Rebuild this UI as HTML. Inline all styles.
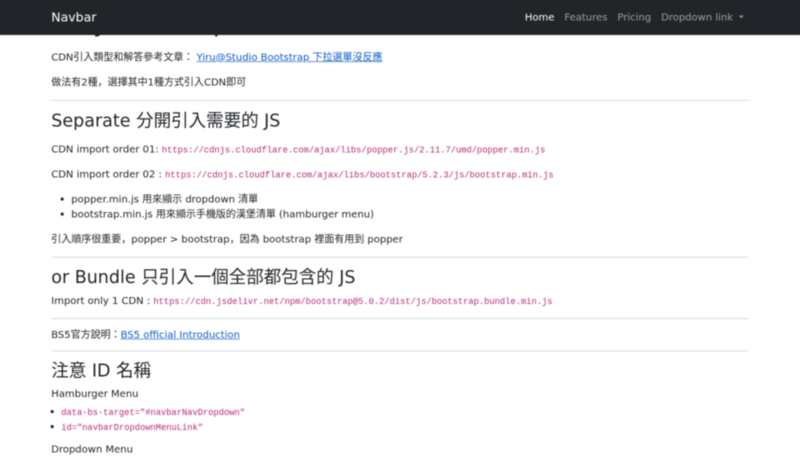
<!DOCTYPE html>
<html>
<head>
<meta charset="utf-8">
<title>Navbar</title>
<style>
html,body{margin:0;padding:0;width:800px;height:450px;overflow:hidden;background:#fff}
#s{position:absolute;left:-10px;top:-10px;width:1340px;height:760px;overflow:hidden;transform:scale(.625);transform-origin:0 0;font-family:"DejaVu Sans","Noto Sans CJK JP",sans-serif;font-size:16px;line-height:1.5;color:#212529;filter:blur(.65px);background:#fff}
#i{position:absolute;left:16px;top:16px;width:1280px;height:740px}
nav{position:absolute;left:-16px;top:-16px;width:1340px;height:72px;background:#212529;z-index:5}
.brand{position:absolute;left:98px;top:28px;font-size:20px;line-height:30px;color:#fff}
.nav{position:absolute;right:126px;top:24px;display:flex;height:40px;line-height:24px}
.nav a{padding:8px;color:rgba(255,255,255,.55);white-space:pre}
.nav a.on{color:#fff}
.nav a.dd::after{content:"";display:inline-block;margin-left:.255em;vertical-align:.255em;border-top:.3em solid;border-right:.3em solid transparent;border-left:.3em solid transparent}
main{position:absolute;left:82px;top:80px;width:1116px}
p{margin:0 0 16px;height:24px;white-space:nowrap}
li{height:24px;white-space:nowrap}
h3{font-size:28px;font-weight:400;line-height:1.2;margin:0 0 8px;height:33.6px;position:relative;top:-1px;white-space:nowrap}
h3.f{margin-bottom:16.3px}
hr{margin:16px 0;border:0;border-top:1px solid #212529;opacity:.25}
hr.a{margin-bottom:13.5px}
hr.b{margin-top:13.5px;margin-bottom:15px}
ul{margin:0 0 16px;padding-left:32px}
ul.c{padding-left:16px;margin-bottom:12.3px}
code{font-family:"Liberation Mono",monospace;font-size:14px;color:#b82a72}
a.l{color:#0a5cc8;text-decoration:underline}
.peek{position:absolute;left:82px;top:13px;font-size:40px;line-height:48px}
.peek span{position:absolute;top:0;white-space:nowrap}
</style>
</head>
<body>
<div id="s"><div id="i">
<div class="peek"><span style="left:2px">Why</span><span style="left:193px">Step</span></div>
<nav>
<div class="brand">Navbar</div>
<div class="nav"><a class="on">Home</a><a>Features</a><a>Pricing</a><a class="dd">Dropdown link </a></div>
</nav>
<main>
<p>CDN引入類型和解答參考文章： <a class="l">Yiru@Studio Bootstrap 下拉選單沒反應</a></p>
<p>做法有2種，選擇其中1種方式引入CDN即可</p>
<hr>
<h3 class="f">Separate 分開引入需要的 JS</h3>
<p>CDN import order 01: <code>https://cdnjs.cloudflare.com/ajax/libs/popper.js/2.11.7/umd/popper.min.js</code></p>
<p>CDN import order 02 : <code>https://cdnjs.cloudflare.com/ajax/libs/bootstrap/5.2.3/js/bootstrap.min.js</code></p>
<ul>
<li>popper.min.js 用來顯示 dropdown 清單</li>
<li>bootstrap.min.js 用來顯示手機版的漢堡清單 (hamburger menu)</li>
</ul>
<p>引入順序很重要，popper &gt; bootstrap，因為 bootstrap 裡面有用到 popper</p>
<hr>
<h3>or Bundle 只引入一個全部都包含的 JS</h3>
<p>Import only 1 CDN : <code>https://cdn.jsdelivr.net/npm/bootstrap@5.0.2/dist/js/bootstrap.bundle.min.js</code></p>
<hr class="a">
<p style="margin:0">BS5官方說明：<a class="l">BS5 official Introduction</a></p>
<hr class="b">
<h3 style="margin-bottom:7px">注意 ID 名稱</h3>
<p style="margin-bottom:5px">Hamburger Menu</p>
<ul class="c">
<li><code>data-bs-target="#navbarNavDropdown"</code></li>
<li><code>id="navbarDropdownMenuLink"</code></li>
</ul>
<p>Dropdown Menu</p>
</main>
</div></div>
</body>
</html>
